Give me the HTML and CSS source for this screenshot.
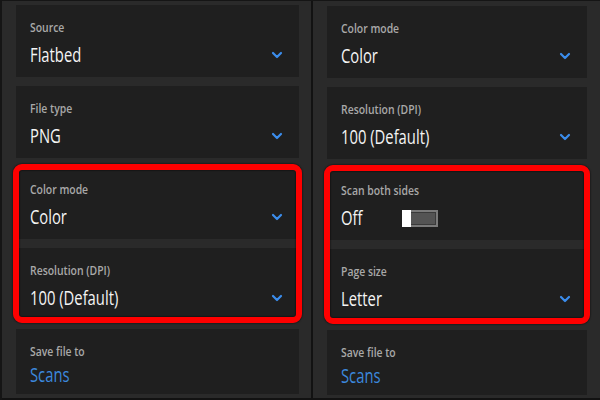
FILE: index.html
```html
<!DOCTYPE html>
<html lang="en">
<head>
<meta charset="utf-8">
<title>Scan settings</title>
<link rel="stylesheet" href="styles.css">
</head>
<body>
<div class="screen">
  <section class="panel panel-left">
    <div class="card">
      <div class="label"><span class="sq">Source</span></div>
      <div class="row"><span class="value sq">Flatbed</span><svg class="chev" viewBox="0 0 10 6"><polyline points="1,1 5,5 9,1"/></svg></div>
    </div>
    <div class="card">
      <div class="label"><span class="sq">File type</span></div>
      <div class="row"><span class="value sq">PNG</span><svg class="chev" viewBox="0 0 10 6"><polyline points="1,1 5,5 9,1"/></svg></div>
    </div>
    <div class="group">
      <div class="card">
        <div class="label"><span class="sq">Color mode</span></div>
        <div class="row"><span class="value sq">Color</span><svg class="chev" viewBox="0 0 10 6"><polyline points="1,1 5,5 9,1"/></svg></div>
      </div>
      <div class="card">
        <div class="label"><span class="sq">Resolution (DPI)</span></div>
        <div class="row"><span class="value sq">100 (Default)</span><svg class="chev" viewBox="0 0 10 6"><polyline points="1,1 5,5 9,1"/></svg></div>
      </div>
      <span class="highlight"></span>
    </div>
    <div class="card card-short">
      <div class="label"><span class="sq">Save file to</span></div>
      <div class="row"><span class="value link sq">Scans</span></div>
    </div>
  </section>

  <section class="panel panel-right">
    <div class="card">
      <div class="label"><span class="sq">Color mode</span></div>
      <div class="row"><span class="value sq">Color</span><svg class="chev" viewBox="0 0 10 6"><polyline points="1,1 5,5 9,1"/></svg></div>
    </div>
    <div class="card">
      <div class="label"><span class="sq">Resolution (DPI)</span></div>
      <div class="row"><span class="value sq">100 (Default)</span><svg class="chev" viewBox="0 0 10 6"><polyline points="1,1 5,5 9,1"/></svg></div>
    </div>
    <div class="group">
      <div class="card">
        <div class="label"><span class="sq">Scan both sides</span></div>
        <div class="row row-toggle"><span class="value toggle-text sq">Off</span><span class="toggle"><span class="thumb"></span></span></div>
      </div>
      <div class="card">
        <div class="label"><span class="sq">Page size</span></div>
        <div class="row"><span class="value sq">Letter</span><svg class="chev" viewBox="0 0 10 6"><polyline points="1,1 5,5 9,1"/></svg></div>
      </div>
      <span class="highlight"></span>
    </div>
    <div class="card card-short">
      <div class="label"><span class="sq">Save file to</span></div>
      <div class="row"><span class="value link sq">Scans</span></div>
    </div>
  </section>
</div>
</body>
</html>
```

FILE: styles.css
```css
* { box-sizing: border-box; }

html, body {
  margin: 0;
  padding: 0;
  background: #121212;
}

body {
  font-family: "Open Sans", "Noto Sans", sans-serif;
  width: 600px;
  height: 400px;
  overflow: hidden;
}

.screen {
  display: grid;
  grid-template-columns: 309px 287px;
  column-gap: 2px;
  height: 400px;
  border-top: 1px solid #151515;
  border-left: 2px solid #151515;
}

.panel {
  background: #2a2a2a;
  display: flex;
  flex-direction: column;
  gap: 9px;
  overflow: hidden;
  height: 397px;
}

.panel-left {
  padding: 4px 12px 0 14px;
}

.panel-right {
  padding: 5px 13px 0 14px;
}

.group {
  position: relative;
  display: flex;
  flex-direction: column;
  gap: 9px;
}

.highlight {
  position: absolute;
  top: -3px;
  bottom: -3px;
  left: -3px;
  right: -3px;
  border: 6px solid #ff0000;
  border-radius: 9px;
  box-shadow: 0 0 2px #000, inset 0 0 2px #000;
}

.card {
  background: #1f1f1f;
  height: 72px;
  padding: 14px 17px 0 14px;
  flex: none;
}

.card-short {
  height: 65px;
}

.label {
  font-size: 13px;
  line-height: 16px;
  font-weight: 600;
  color: #a9a9a9;
  white-space: nowrap;
}

.label .sq {
  transform: scaleX(0.8);
}

.row {
  display: flex;
  align-items: center;
  justify-content: space-between;
  margin-top: 8px;
  height: 24px;
}

.card-short .row {
  margin-top: 4px;
}

.value {
  font-size: 20px;
  line-height: 24px;
  color: #f4f4f4;
  white-space: nowrap;
}

.sq {
  display: inline-block;
  transform: scaleX(0.74);
  transform-origin: left center;
}

.link {
  color: #3c88dc;
}

.chev {
  width: 10px;
  height: 6px;
  flex: none;
  overflow: visible;
}

.chev polyline {
  fill: none;
  stroke: #3b8ded;
  stroke-width: 2.2;
  stroke-linecap: round;
  stroke-linejoin: round;
}

.row-toggle {
  justify-content: flex-start;
}

.toggle-text {
  width: 61px;
}

.toggle {
  position: relative;
  width: 36px;
  height: 17px;
  background: #545454;
  border: 2px solid #7a7a7a;
  box-shadow: inset 0 0 0 1px #3a3a3a;
}

.thumb {
  position: absolute;
  left: -2px;
  top: -2px;
  width: 9px;
  height: 17px;
  background: #ffffff;
}
```
